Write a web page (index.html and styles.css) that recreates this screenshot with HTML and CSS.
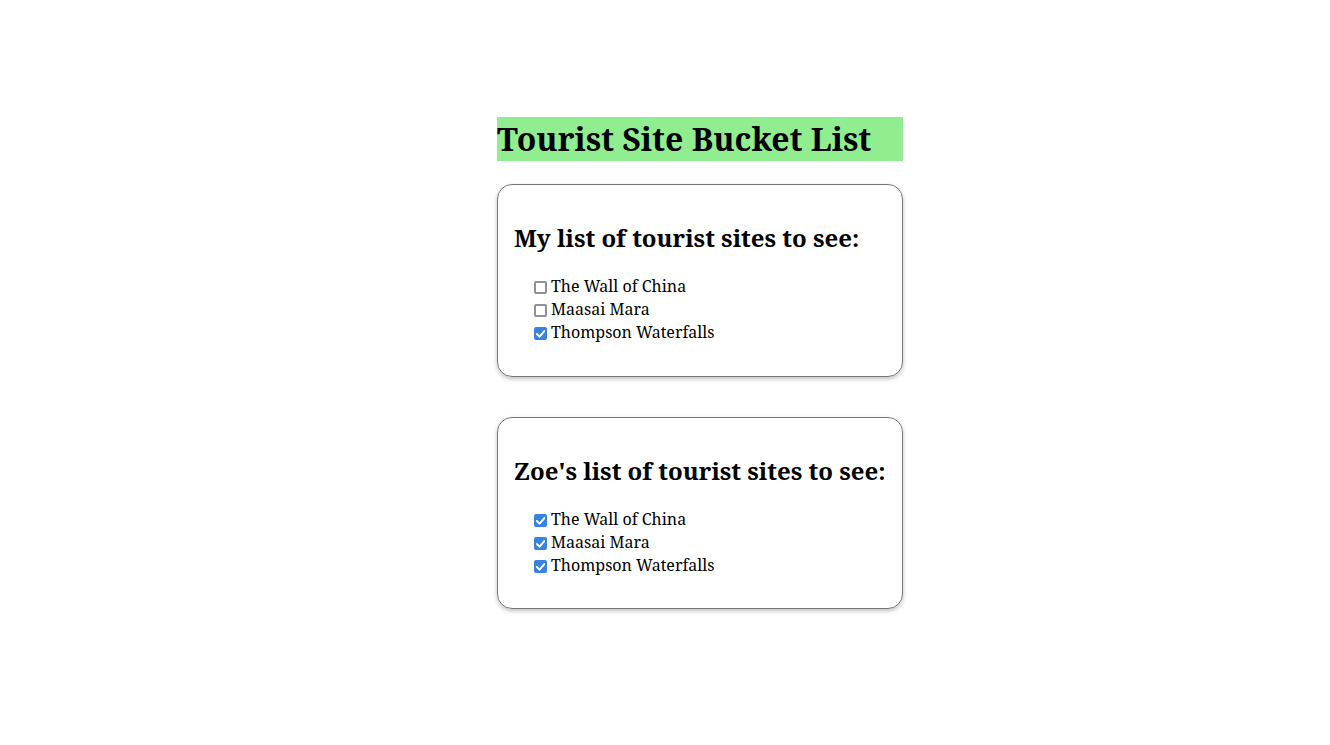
FILE: index.html
```html
<!DOCTYPE html>
<html lang="en">
<head>
    <meta charset="UTF-8">
    <meta name="viewport" content="width=device-width, initial-scale=1.0">
    <title>Tourist Site Bucket List</title>
    <link rel="stylesheet" href="styles.css">
</head>
<body>

<div class="app">
    <h1 class="title">Tourist Site Bucket List</h1>

    <div class="card">
        <h2>My list of tourist sites to see:</h2>
        <ul class="sites">
            <li><input type="checkbox"><label>The Wall of China</label></li>
            <li><input type="checkbox"><label>Maasai Mara</label></li>
            <li><input type="checkbox" checked><label>Thompson Waterfalls</label></li>
        </ul>
    </div>

    <div class="card">
        <h2>Zoe's list of tourist sites to see:</h2>
        <ul class="sites">
            <li><input type="checkbox" checked><label>The Wall of China</label></li>
            <li><input type="checkbox" checked><label>Maasai Mara</label></li>
            <li><input type="checkbox" checked><label>Thompson Waterfalls</label></li>
        </ul>
    </div>
</div>

</body>
</html>
```

FILE: styles.css
```css
body {
    margin: 0;
    padding-left: 70px; /* keeps the column centred on 700px like the original */
    font-family: "Noto Serif", serif;
    color: #000;
    background: #fff;
}

.app {
    width: 406px;
    margin: 0 auto;
    padding-top: 96px;
}

.title {
    background-color: lightgreen;
    font-size: 32px;
    line-height: 44px;
    margin: 21px 0 23px;
}

.card {
    border: 1px solid #777;
    border-radius: 15px;
    box-shadow: 0 2px 4px rgba(0, 0, 0, 0.25);
    padding: 16px;
    margin-bottom: 40px;
}

.card h2 {
    font-size: 24px;
    margin: 20px 0 21px;
}

.sites {
    list-style: none;
    padding-left: 16px;
    margin: 16px 0 15.6px;
}

.sites li {
    line-height: 23px;
}

/* gtk-ish checkbox look */
.sites input {
    appearance: none;
    -webkit-appearance: none;
    width: 13px;
    height: 13px;
    margin: 0 4px 0 4px;
    border: 2px solid #8f8f9d;
    border-radius: 2px;
    background: #fff;
    vertical-align: -2px;
    box-sizing: border-box;
}

.sites input:checked {
    border-color: #3584e4;
    background: #3584e4 url("data:image/svg+xml,%3Csvg xmlns='http://www.w3.org/2000/svg' viewBox='0 0 9 9'%3E%3Cpath d='M1.2 4.7 L3.5 7 L7.8 2.1' fill='none' stroke='white' stroke-width='1.7' stroke-linecap='round' stroke-linejoin='round'/%3E%3C/svg%3E") center / 10px 10px no-repeat;
}
```
